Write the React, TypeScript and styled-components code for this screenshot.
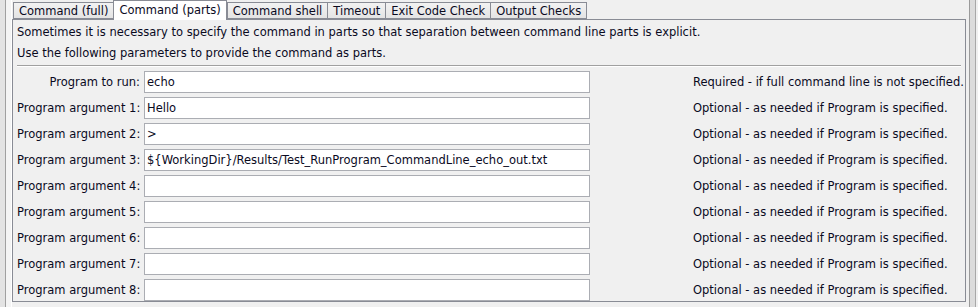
import styled, { createGlobalStyle } from 'styled-components'

const GlobalStyle = createGlobalStyle`
  html, body {
    margin: 0;
    padding: 0;
    background: #f0f0f0;
  }
  body {
    font-family: 'DejaVu Sans', Verdana, sans-serif;
    font-size: 11.5px;
    color: #0a0a1e;
  }
`

const Frame = styled.div`
  display: flex;
  flex-direction: row;
  width: 978px;
  height: 307px;
  overflow: hidden;
  background: #f0f0f0;
`

// window edge on the left, a bit of the neighbouring panel
const LeftEdge = styled.div`
  width: 12px;
  flex: none;
  box-sizing: border-box;
  background: linear-gradient(to right, #e3e3e3 0 5px, #a0a0a0 5px 6px, #f4f4f4 6px 11px, #ffffff 11px 12px);
`

const RightEdge = styled.div`
  width: 12px;
  flex: none;
  box-sizing: border-box;
  background: linear-gradient(to right, #f0f0f0 0 3px, #9a9a9a 3px 4px, #dcdcdc 4px 9px, #a8a8a8 9px 10px, #f0f0f0 10px 12px);
`

const TabPane = styled.div`
  flex: 1;
  display: flex;
  flex-direction: column;
  padding-bottom: 6px;
  min-width: 0;
`

const TabStrip = styled.div`
  display: flex;
  flex-direction: row;
  align-items: flex-end;
  height: 19px;
  padding-left: 1px;
  position: relative;
  z-index: 1;
`

const Tab = styled.div<{ $active?: boolean }>`
  box-sizing: border-box;
  height: ${(p) => (p.$active ? '20px' : '17px')};
  margin-bottom: ${(p) => (p.$active ? '-1px' : '0')};
  padding: ${(p) => (p.$active ? '0 5px 2px' : '0 5px')};
  display: flex;
  align-items: center;
  white-space: nowrap;
  border: 1px solid #898c95;
  border-bottom: ${(p) => (p.$active ? 'none' : '1px solid #898c95')};
  margin-right: ${(p) => (p.$active ? '0' : '-1px')};
  background: ${(p) => (p.$active ? '#ffffff' : 'linear-gradient(#f2f2f2, #e4e4e4)')};
`

const TabContent = styled.div`
  flex: 1;
  box-sizing: border-box;
  border: 1px solid #898c95;
  background: #f0f0f0;
  padding: 2px 4px 0 4px;
  display: flex;
  flex-direction: column;
`

const Intro = styled.p`
  margin: 0;
  line-height: 21px;
  white-space: nowrap;
`

const Separator = styled.hr`
  margin: 1px 0 4px 0;
  border: none;
  border-top: 1px solid #a0a0a0;
  border-bottom: 1px solid #ffffff;
  height: 0;
`

const Form = styled.div`
  display: grid;
  grid-template-columns: 123px 446px 1fr;
  column-gap: 4px;
  row-gap: 4px;
  align-items: center;
`

const Label = styled.label`
  text-align: right;
  white-space: nowrap;
`

const Field = styled.input`
  box-sizing: border-box;
  height: 22px;
  width: 100%;
  margin: 0;
  padding: 0 2px;
  border: 1px solid #abadb3;
  background: #ffffff;
  font: inherit;
  color: inherit;
  outline: none;
`

const Hint = styled.span`
  padding-left: 99px;
  white-space: nowrap;
`

const tabs = ['Command (full)', 'Command (parts)', 'Command shell', 'Timeout', 'Exit Code Check', 'Output Checks']

const rows = [
  { label: 'Program to run:', value: 'echo', hint: 'Required - if full command line is not specified.' },
  { label: 'Program argument 1:', value: 'Hello' },
  { label: 'Program argument 2:', value: '>' },
  { label: 'Program argument 3:', value: '${WorkingDir}/Results/Test_RunProgram_CommandLine_echo_out.txt' },
  { label: 'Program argument 4:', value: '' },
  { label: 'Program argument 5:', value: '' },
  { label: 'Program argument 6:', value: '' },
  { label: 'Program argument 7:', value: '' },
  { label: 'Program argument 8:', value: '' },
]

const App = (): JSX.Element => {
  return (
    <>
      <GlobalStyle />
      <Frame>
        <LeftEdge />
        <TabPane>
          <TabStrip>
            {tabs.map((t) => (
              <Tab key={t} $active={t === 'Command (parts)'}>
                {t}
              </Tab>
            ))}
          </TabStrip>
          <TabContent>
            <Intro>
              Sometimes it is necessary to specify the command in parts so that separation between command line parts is explicit.
            </Intro>
            <Intro>Use the following parameters to provide the command as parts.</Intro>
            <Separator />
            <Form>
              {rows.map((r) => (
                <>
                  <Label key={r.label + 'l'}>{r.label}</Label>
                  <Field key={r.label + 'f'} defaultValue={r.value} readOnly />
                  <Hint key={r.label + 'h'}>{r.hint ?? 'Optional - as needed if Program is specified.'}</Hint>
                </>
              ))}
            </Form>
          </TabContent>
        </TabPane>
        <RightEdge />
      </Frame>
    </>
  )
}

export default App
